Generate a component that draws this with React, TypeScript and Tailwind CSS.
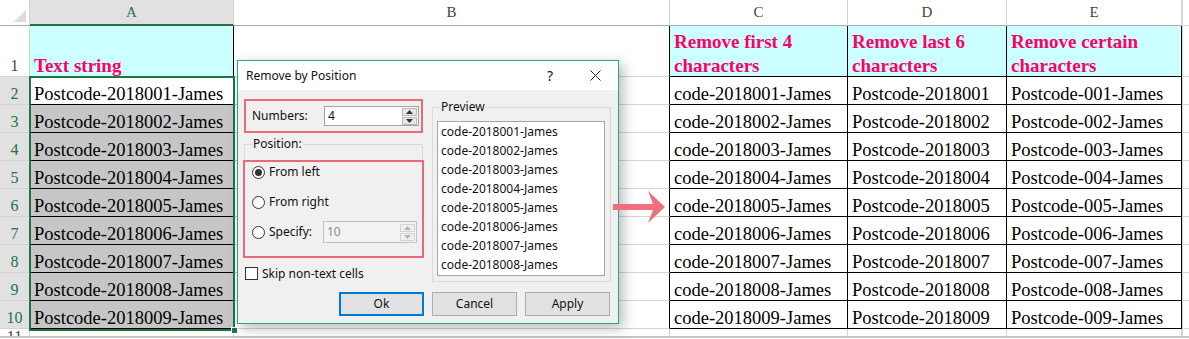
import React from 'react'

const codes = ['001', '002', '003', '004', '005', '006', '007', '008', '009']
const preview = ['001', '002', '003', '004', '005', '006', '007', '008']

const serif = "font-['Liberation_Serif','Times_New_Roman',serif]"

function Spinner({ disabled }: { disabled?: boolean }) {
  const tri = disabled ? '#b5b5b5' : '#333'
  const box = disabled ? 'border-[#d4d4d4] bg-[#f0f0f0]' : 'border-[#b9b9b9] bg-[#e6e6e6]'
  return (
    <div className="ml-auto mr-[1px] flex flex-col gap-[1px]">
      <div className={`flex h-[8px] w-[15px] items-center justify-center border ${box}`}>
        <svg width="7" height="4" viewBox="0 0 7 4">
          <path d="M0 4 L3.5 0 L7 4 Z" fill={tri} />
        </svg>
      </div>
      <div className={`flex h-[8px] w-[15px] items-center justify-center border ${box}`}>
        <svg width="7" height="4" viewBox="0 0 7 4">
          <path d="M0 0 L7 0 L3.5 4 Z" fill={tri} />
        </svg>
      </div>
    </div>
  )
}

function Radio({ checked, label }: { checked?: boolean; label: string }) {
  return (
    <div className="flex min-w-[70px] items-center">
      <span className="flex h-[13px] w-[13px] shrink-0 items-center justify-center rounded-full border border-[#333] bg-white">
        {checked && <span className="h-[7px] w-[7px] rounded-full bg-[#333]" />}
      </span>
      <span className="ml-[4px] whitespace-nowrap">{label}</span>
    </div>
  )
}

function Dialog() {
  return (
    <div className="absolute left-[237px] top-[60px] flex h-[264px] w-[382px] flex-col border border-[#22a88f] bg-[#f0f0f0] font-['Noto_Sans',sans-serif] text-[12px] text-[#111] shadow-[4px_4px_12px_rgba(0,0,0,0.28)]">
      <div className="flex h-[29px] shrink-0 items-center bg-white pl-[8px]">
        <span>Remove by Position</span>
        <span className="ml-auto text-[14px]">?</span>
        <svg className="ml-[37px] mr-[17px]" width="11" height="11" viewBox="0 0 11 11">
          <path d="M0.5 0.5 L10.5 10.5 M10.5 0.5 L0.5 10.5" stroke="#222" strokeWidth="1" />
        </svg>
      </div>
      <div className="flex flex-1 flex-col px-[6px]">
        <div className="flex gap-[9px]">
          <div className="flex w-[179px] flex-col">
            <div className="mt-[9px] flex h-[34px] items-center border-2 border-[#e96b7b] pl-[6px]">
              <span className="w-[72px]">Numbers:</span>
              <div className="flex h-[20px] w-[95px] items-center border border-[#a3a3a3] bg-white pl-[3px]">
                <span>4</span>
                <Spinner />
              </div>
            </div>
            <div className="relative mt-[11px] border border-[#dadada]">
              <span className="absolute -top-[9px] left-[7px] bg-[#f0f0f0] px-[1px] leading-[16px]">Position:</span>
              <div className="-mx-[2px] -mb-[2px] mt-[15px] flex flex-col gap-[10px] border-2 border-[#e96b7b] pb-[14px] pl-[7px]">
                <div className="flex h-[20px] items-center">
                  <Radio checked label="From left" />
                </div>
                <div className="flex h-[20px] items-center">
                  <Radio label="From right" />
                </div>
                <div className="flex h-[20px] items-center">
                  <Radio label="Specify:" />
                  <div className="ml-[1px] flex h-[22px] w-[94px] shrink-0 items-center border border-[#c2c2c2] bg-[#f3f3f3] pl-[3px] text-[#8e8e8e]">
                    <span>10</span>
                    <Spinner disabled />
                  </div>
                </div>
              </div>
            </div>
            <div className="mt-[10px] flex h-[13px] items-center">
              <span className="ml-[1px] h-[13px] w-[13px] border border-[#333] bg-white" />
              <span className="ml-[4px]">Skip non-text cells</span>
            </div>
          </div>
          <div className="flex w-[179px] flex-col">
            <div className="relative mt-[17px] h-[175px] border border-[#dadada]">
              <span className="absolute -top-[9px] left-[7px] bg-[#f0f0f0] px-[1px] leading-[16px]">Preview</span>
              <div className="ml-[4px] mr-[5px] mt-[13px] h-[155px] border border-[#a5a5a5] bg-white">
                {preview.map((n) => (
                  <div key={n} className="h-[19px] pl-[3px] leading-[19px]">
                    code-2018{n}-James
                  </div>
                ))}
              </div>
            </div>
          </div>
        </div>
        <div className="mr-[2px] mt-[10px] flex justify-end gap-[8px]">
          <button type="button" className="h-[24px] w-[85px] border-2 border-[#0078d7] bg-[#e1e1e1]">
            Ok
          </button>
          <button type="button" className="h-[24px] w-[85px] border border-[#adadad] bg-[#e1e1e1]">
            Cancel
          </button>
          <button type="button" className="h-[24px] w-[85px] border border-[#adadad] bg-[#e1e1e1]">
            Apply
          </button>
        </div>
      </div>
    </div>
  )
}

export default function App() {
  const head = 'flex items-center justify-center border-r border-b border-r-[#d4d4d4] border-b-[#ababab] text-[15px] text-[#444]'
  const num = 'flex items-end justify-center border-r border-b border-[#d4d4d4] text-[16px] leading-[24px]'
  const cell = 'flex items-end whitespace-nowrap pl-1 text-[18.5px] leading-[24px] text-black'
  const title = 'flex items-end px-1 text-[19px] font-bold leading-[24px] text-[#ff0066]'
  const nudge = '-mb-[2px]'

  return (
    <div className={`relative h-[339px] w-[1189px] overflow-hidden bg-white ${serif}`}>
      <div className="grid grid-cols-[30px_204px_436px_178px_159px_175px_7px] grid-rows-[26px_51px_repeat(9,28px)_7px]">
        {/* column headers */}
        <div className="flex items-end justify-end border-r border-b border-r-[#d4d4d4] border-b-[#ababab] pb-[3px] pr-[3px]">
          <svg width="12" height="12" viewBox="0 0 12 12">
            <path d="M12 0 L12 12 L0 12 Z" fill="#dcdcdc" />
          </svg>
        </div>
        <div className="flex items-center justify-center border-r border-b-2 border-r-[#d4d4d4] border-b-[#217346] bg-[#e1e1e1] text-[15px] text-[#217346]">
          A
        </div>
        <div className={head}>B</div>
        <div className={head}>C</div>
        <div className={head}>D</div>
        <div className={head}>E</div>
        <div className="border-l border-b border-[#d4d4d4]" />

        {/* row 1 */}
        <div className={`${num} text-[#444]`}>
          <span className={nudge}>1</span>
        </div>
        <div className={`${title} border-r border-b border-black bg-[#ccffff]`}>
          <span className={nudge}>Text string</span>
        </div>
        <div className="border-r border-b border-r-black border-b-[#d4d4d4]" />
        <div className={`${title} border-r border-b border-black bg-[#ccffff]`}>
          <span className={nudge}>Remove first 4 characters</span>
        </div>
        <div className={`${title} border-r border-b border-black bg-[#ccffff]`}>
          <span className={nudge}>Remove last 6 characters</span>
        </div>
        <div className={`${title} border-r border-b border-black bg-[#ccffff]`}>
          <span className={nudge}>Remove certain characters</span>
        </div>
        <div className="border-l border-b border-[#d4d4d4]" />

        {codes.map((c, i) => (
          <React.Fragment key={c}>
            <div className={`${num} bg-[#e1e1e1] text-[#217346]`}>
              <span className={nudge}>{i + 2}</span>
            </div>
            <div className={`${cell} border-r border-b border-black ${i === 0 ? 'bg-white' : 'bg-[#c6c6c6]'}`}>
              <span className={nudge}>Postcode-2018{c}-James</span>
            </div>
            <div className="border-r border-b border-r-black border-b-[#d4d4d4]" />
            <div className={`${cell} border-r border-b border-black`}>
              <span className={nudge}>code-2018{c}-James</span>
            </div>
            <div className={`${cell} border-r border-b border-black`}>
              <span className={nudge}>Postcode-2018{c}</span>
            </div>
            <div className={`${cell} border-r border-b border-black`}>
              <span className={nudge}>Postcode-{c}-James</span>
            </div>
            <div className="border-l border-b border-[#d4d4d4]" />
          </React.Fragment>
        ))}

        {/* row 11, cut off by the window edge */}
        <div className="flex justify-center overflow-hidden border-r border-[#d4d4d4] text-[16px] leading-4 text-[#444]">
          11
        </div>
        <div className="border-r border-[#d4d4d4]" />
        <div className="border-r border-[#d4d4d4]" />
        <div className="border-r border-[#d4d4d4]" />
        <div className="border-r border-[#d4d4d4]" />
        <div className="border-r border-[#d4d4d4]" />
        <div className="border-l border-[#d4d4d4]" />
      </div>
      <div className="h-[2px] bg-[#c4c4c4]" />

      {/* selection of A2:A10 */}
      <div className="pointer-events-none absolute left-[29px] top-[76px] h-[255px] w-[206px] border-2 border-[#217346]">
        <span className="absolute -bottom-[5px] -right-[5px] h-[7px] w-[7px] border border-white bg-[#217346]" />
      </div>

      <Dialog />

      <svg className="absolute left-[612px] top-[190px]" width="54" height="34" viewBox="0 0 54 34">
        <path d="M1 14 H41 L36 1 L53 17 L36 33 L41 20 H1 Z" fill="#f06e7e" />
      </svg>
    </div>
  )
}
